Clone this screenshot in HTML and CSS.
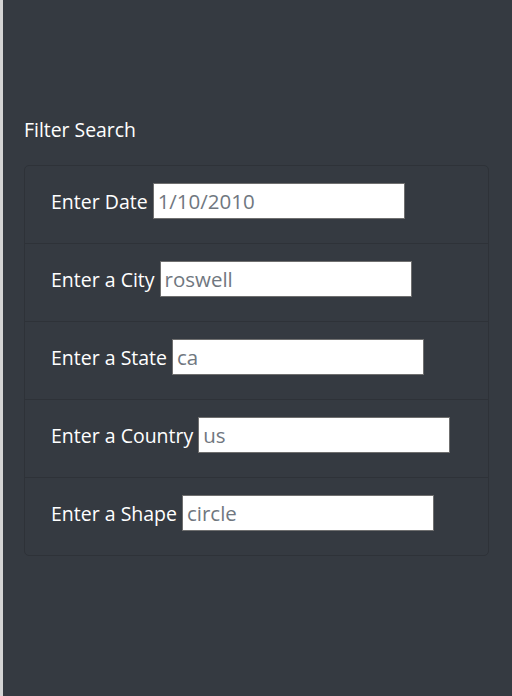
FILE: index.html
```html
<!DOCTYPE html>
<html lang="en">
<head>
<meta charset="utf-8">
<title>Filter Search</title>
<link rel="stylesheet" href="styles.css">
</head>
<body>
<div class="page">
  <h5 class="title">Filter Search</h5>
  <ul class="filters">
    <li class="filter"><label for="date">Enter Date</label><input id="date" type="text" placeholder="1/10/2010"></li>
    <li class="filter"><label for="city">Enter a City</label><input id="city" type="text" placeholder="roswell"></li>
    <li class="filter"><label for="state">Enter a State</label><input id="state" type="text" placeholder="ca"></li>
    <li class="filter"><label for="country">Enter a Country</label><input id="country" type="text" placeholder="us"></li>
    <li class="filter"><label for="shape">Enter a Shape</label><input id="shape" type="text" placeholder="circle"></li>
  </ul>
</div>
</body>
</html>
```
FILE: styles.css
```css
html, body {
  margin: 0;
  height: 100%;
}
body {
  background: #353a41;
  font-family: "Open Sans", "Noto Sans", sans-serif;
  color: #ffffff;
}
.page {
  box-sizing: border-box;
  min-height: 100%;
  border-left: 3px solid #d4d4d4;
  padding: 114px 23px 0 21px;
}
.title {
  margin: 0 0 20px 0;
  font-size: 19.4px;
  font-weight: 400;
  line-height: 31px;
}
.filters {
  list-style: none;
  margin: 0;
  padding: 0;
  width: 465px;
  box-sizing: border-box;
  border: 1px solid #2e3238;
  border-radius: 5px;
}
.filter {
  display: flex;
  align-items: flex-start;
  gap: 5px;
  height: 78px;
  box-sizing: border-box;
  padding: 17px 0 0 26px;
  border-bottom: 1px solid #2e3238;
}
.filter:last-child {
  border-bottom: none;
  height: 77px;
}
.filter label {
  font-size: 19.5px;
  line-height: 37px;
}
.filter input {
  box-sizing: border-box;
  width: 252px;
  height: 36px;
  margin: 0;
  padding: 0 4px;
  border: 1px solid #6f6f6f;
  border-radius: 0;
  background: #ffffff;
  font-family: "Open Sans", "Noto Sans", sans-serif;
  font-size: 20.5px;
  color: #6c757d;
  outline: none;
}
.filter input::placeholder {
  color: #707780;
  opacity: 1;
}
```
